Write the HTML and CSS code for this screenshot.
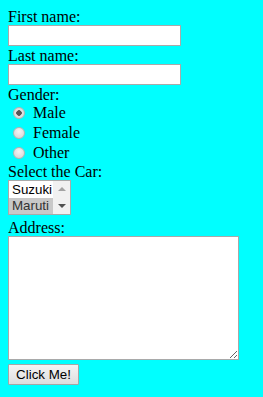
FILE: index.html
```
<!DOCTYPE html>
<html lang="en">
<head>
    <meta charset="UTF-8">
    <title>Form</title>
    <link rel="stylesheet" href="styles.css">
</head>
<body>
    <form class="form">
        <div class="label">First name:</div>
        <input class="text-input" type="text" name="firstname">
        <div class="label">Last name:</div>
        <input class="text-input" type="text" name="lastname">
        <div class="label">Gender:</div>
        <label class="radio-row"><input class="radio" type="radio" name="gender" value="male" checked> Male</label>
        <label class="radio-row"><input class="radio" type="radio" name="gender" value="female"> Female</label>
        <label class="radio-row"><input class="radio" type="radio" name="gender" value="other"> Other</label>
        <div class="label">Select the Car:</div>
        <div class="listbox">
            <div class="options">
                <div class="option">Suzuki</div>
                <div class="option selected">Maruti</div>
            </div>
            <div class="scrollbar">
                <span class="arrow up"></span>
                <span class="arrow down"></span>
            </div>
        </div>
        <div class="label">Address:</div>
        <textarea class="address" name="address"></textarea>
        <button class="submit" type="button">Click Me!</button>
    </form>
</body>
</html>
```

FILE: styles.css
```
body {
    margin: 8px;
    background: #00ffff;
    font-family: "Liberation Serif", "Times New Roman", serif;
    font-size: 16px;
    color: #000;
}

.form {
    display: flex;
    flex-direction: column;
    align-items: flex-start;
}

.label {
    height: 17px;
    line-height: 17px;
}

.text-input {
    box-sizing: border-box;
    width: 173px;
    height: 21px;
    margin: 0 0 1px;
    padding: 1px 2px;
    border: 1px solid #a9a9a9;
    background: #fff;
    font-family: "Liberation Sans", Arial, sans-serif;
    font-size: 13px;
}

.radio-row {
    display: flex;
    align-items: center;
    height: 20px;
    gap: 8px;
}

.radio {
    appearance: none;
    box-sizing: border-box;
    width: 12px;
    height: 12px;
    margin: 0 0 0 5px;
    border: 1px solid #b4b4b4;
    border-radius: 50%;
    background: radial-gradient(circle at 50% 35%, #f4f4f4 0%, #dcdcdc 70%, #cfcfcf 100%);
}

.radio:checked {
    background: radial-gradient(circle, #555 0 2.5px, #e2e2e2 3px, #d4d4d4 100%);
}

.listbox {
    box-sizing: border-box;
    display: flex;
    width: 63px;
    height: 35px;
    border: 1px solid #a9a9a9;
    background: #fff;
    font-family: "Liberation Sans", Arial, sans-serif;
    font-size: 13.33px;
    margin-bottom: 4px;
}

.options {
    flex: 1;
    padding-top: 1px;
}

.option {
    height: 16px;
    line-height: 16px;
    padding-left: 3px;
}

.option.selected {
    background: #c8c8c8;
    color: #333;
}

.scrollbar {
    width: 17px;
    background: #f1f1f1;
    display: flex;
    flex-direction: column;
    justify-content: space-between;
    align-items: center;
    padding: 6px 0 6px;
}

.arrow {
    width: 0;
    height: 0;
    border-left: 4px solid transparent;
    border-right: 4px solid transparent;
}

.arrow.up {
    border-bottom: 4px solid #a3a3a3;
}

.arrow.down {
    border-top: 4px solid #505050;
}

.address {
    box-sizing: border-box;
    width: 231px;
    height: 124px;
    margin: 0;
    border: 1px solid #a9a9a9;
    background: #fff;
    resize: both;
}

.submit {
    margin-top: 4px;
    box-sizing: border-box;
    width: 71px;
    height: 21px;
    padding: 0;
    border: 1px solid #a6a6a6;
    border-radius: 1px;
    background: linear-gradient(#f4f4f4, #dedede);
    font-family: "Liberation Sans", Arial, sans-serif;
    font-size: 13.33px;
    color: #000;
}
```
